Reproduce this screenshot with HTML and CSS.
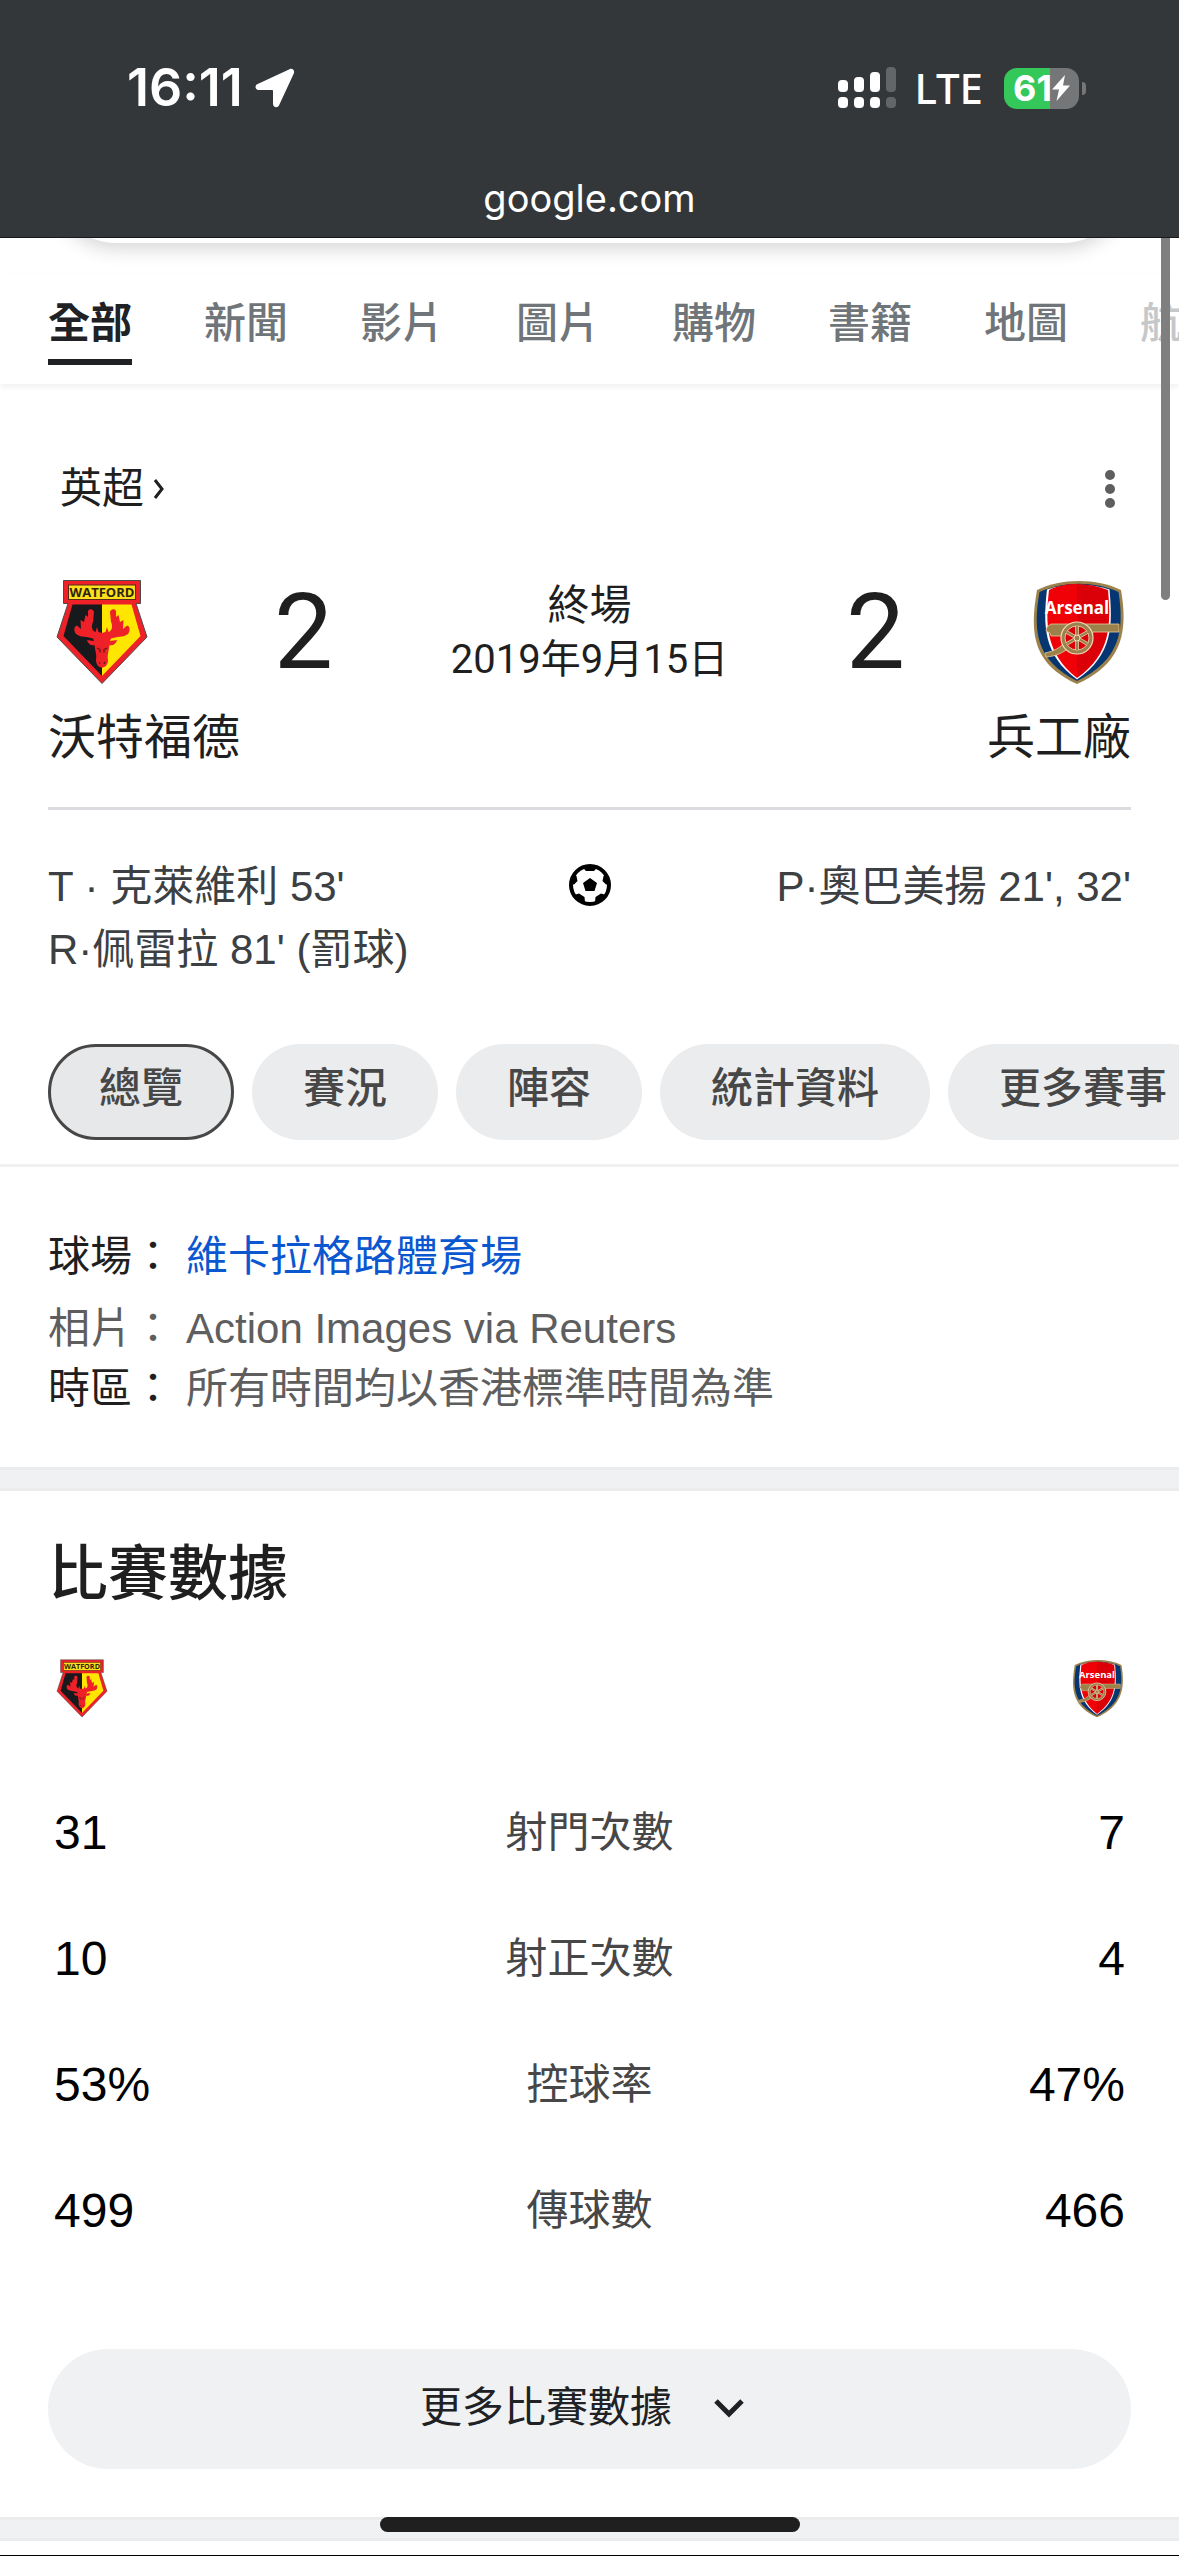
FILE: index.html
```html
<!DOCTYPE html>
<html lang="zh-Hant">
<head>
  <meta charset="UTF-8" />
  <meta name="viewport" content="width=device-width, initial-scale=1.0" />
  <title>沃特福德 2 - 2 兵工廠</title>
  <link rel="stylesheet" href="styles.css">
</head>
<body>

  <!-- shared club badges -->
  <svg class="sprite" aria-hidden="true">
    <symbol id="watford" viewBox="0 0 108 108">
      <path d="M15.500 1.500h77v23h-4.500L99 58 54 104.500 9 58l11-33.500h-4.500z" fill="#ed2127" stroke="#4b4b4b" stroke-width="1" />
      <path d="M24.500 25.500H54V97L15.500 57z" fill="#17191c" />
      <path d="M54 25.500h29.500L92.500 57 54 97z" fill="#ffe600" />
      <rect x="20.500" y="6" width="67" height="14.500" fill="#ffdf1a" stroke="#5a2a18" stroke-width="1" />
      <text x="54" y="18" text-anchor="middle" class="watford-text">WATFORD</text>
      <g fill="#ed2127">
        <path d="M54.200 54L50.500 53 49 48 47.500 53C44 52 43 47 45 43L46 33C45 29.500 41 29.500 40 32L40 38 37.500 36 36 43 32.500 41 33 50 29 46.500C26 47 25.500 52 28 55C32 58.500 40 57.500 45 59.500L46 62 39 61C40 65 43 67 46.500 66C47 72 49 75 48 81C48 86 51 88.500 54.200 88.500Z" />
        <path transform="translate(108) scale(-1 1)" d="M54.200 54L50.500 53 49 48 47.500 53C44 52 43 47 45 43L46 33C45 29.500 41 29.500 40 32L40 38 37.500 36 36 43 32.500 41 33 50 29 46.500C26 47 25.500 52 28 55C32 58.500 40 57.500 45 59.500L46 62 39 61C40 65 43 67 46.500 66C47 72 49 75 48 81C48 86 51 88.500 54.200 88.500Z" />
      </g>
      <path d="M49 69l3 1.500v3M59 69l-3 1.500v3M51 83l1 2M57 83l-1 2" fill="none" stroke="#5b1717" stroke-width="1.200" />
    </symbol>
    <symbol id="arsenal" viewBox="0 0 108 108">
      <path d="M14 11C38-1 74-1 98 11c7 41 2 73-44 94C8 84 7 52 14 11z" fill="#9c824a" />
      <path d="M16.500 13C40 2 72 2 95.500 13c6 38 2 68-41.500 89C12 81 10 51 16.500 13z" fill="#063672" />
      <path d="M24 10.500C42 4 68 4 86.500 10.500c3 35 4 65-32.500 90C20 76 20 46 24 10.500z" fill="#fff" />
      <path d="M26 11C36 6 46 5 54 5v94C23 75 22 46 26 11z" fill="#ef0107" />
      <path d="M54 5c10 0 21 2 31 6 3 35 3 64-31 88z" fill="#db0007" />
      <text x="54" y="35" text-anchor="middle" class="arsenal-text">Arsenal</text>
      <path d="M24 48l4-3h68v8H70l-1 4H28l-1-3-4-2zM22 74c9-2 15-5 20-11l4 6c-7 5-12 8-23 9z" fill="#9c824a" stroke="#e8c9a0" stroke-width=".8" />
      <circle cx="54" cy="59" r="16" fill="#9c824a" stroke="#f0dcc0" stroke-width="1.200" />
      <circle cx="54" cy="59" r="12" fill="#db0007" stroke="#f0dcc0" stroke-width=".8" />
      <path d="M54 47v24M43.500 53l21 12M64.500 53l-21 12" stroke="#f0dcc0" stroke-width="3.600" />
      <path d="M54 47v24M43.500 53l21 12M64.500 53l-21 12" stroke="#9c824a" stroke-width="2.200" />
      <circle cx="54" cy="59" r="3" fill="#9c824a" stroke="#f0dcc0" stroke-width="1" />
    </symbol>
  </svg>

  <header class="browser-bar">
    <div class="status">
      <div class="status-left">
        <span class="time">16:11</span>
        <svg class="location" viewBox="0 0 40 40"><path d="M34.500 1.200 2.700 16C-.8 17.600.2 22 3.600 22H17c.6 0 1 .4 1 1v12.800c0 4 4.800 4.600 6.200 1.200L38.800 5.400C40 2.400 37.500-.2 34.500 1.200z" fill="#fff" /></svg>
      </div>
      <div class="status-right">
        <svg class="signal" viewBox="0 0 58 42" fill="#fff">
          <rect x="0" y="13" width="10" height="12" rx="4" />
          <rect x="16" y="10" width="10" height="15" rx="4" />
          <rect x="32" y="5" width="10" height="20" rx="4" />
          <rect x="0" y="30" width="10" height="11" rx="4" />
          <rect x="16" y="30" width="10" height="11" rx="4" />
          <rect x="32" y="30" width="10" height="11" rx="4" />
          <g fill="#636567">
            <rect x="48" y="0" width="10" height="25" rx="4" />
            <rect x="48" y="30" width="10" height="11" rx="4" />
          </g>
        </svg>
        <span class="network">LTE</span>
        <div class="battery">
          <span class="level">61</span>
          <svg class="bolt" viewBox="0 0 18 26"><path d="M13 0 0 14.500h7L4.500 26 18 10.500h-7z" fill="#fff" /></svg>
        </div>
      </div>
    </div>
    <div class="address">google.com</div>
  </header>

  <div class="scrollbar"></div>

  <div class="search-edge"><div class="search-box"></div></div>

  <nav class="tabs">
    <a class="tab active" href="#">全部</a>
    <a class="tab" href="#">新聞</a>
    <a class="tab" href="#">影片</a>
    <a class="tab" href="#">圖片</a>
    <a class="tab" href="#">購物</a>
    <a class="tab" href="#">書籍</a>
    <a class="tab" href="#">地圖</a>
    <a class="tab" href="#">航班</a>
  </nav>

  <main>
    <section class="match">
      <div class="league">
        <a class="league-link" href="#">英超
          <svg class="league-arrow" viewBox="0 0 12 20"><path d="M2 1l7 9-7 9" fill="none" stroke="#1f1f1f" stroke-width="3" /></svg>
        </a>
        <button class="more-menu" aria-label="更多選項">
          <svg viewBox="0 0 12 38" fill="#5e5e5e"><circle cx="6" cy="5" r="5" /><circle cx="6" cy="19" r="5" /><circle cx="6" cy="33" r="5" /></svg>
        </button>
      </div>

      <div class="scoreboard">
        <svg class="badge"><use href="#watford" /></svg>
        <span class="score">2</span>
        <div class="match-state">
          <div>終場</div>
          <div class="date">2019年9月15日</div>
        </div>
        <span class="score">2</span>
        <svg class="badge"><use href="#arsenal" /></svg>
      </div>

      <div class="teams">
        <span>沃特福德</span>
        <span>兵工廠</span>
      </div>

      <div class="goals">
        <div class="scorers">
          <div>T · 克萊維利 53'</div>
          <div>R·佩雷拉 81' (罰球)</div>
        </div>
        <svg class="ball" viewBox="0 0 42 42">
          <circle cx="21" cy="21" r="19" fill="#fff" stroke="#000" stroke-width="4" />
          <path d="M21 14l7 5-2.500 8h-9L14 19zM15.500 2h11v3.500L25 7h-8l-1.500-1.500zM2 13l4-2.500L7.500 12 8.500 17 5 20.500H2zM40 13l-4-2.500-1.500 1.500-1 5 3.500 3.500h3zM5 31l5-1.500 5.500 3.500.5 5-1.500 2zM37 31l-5-1.500-5.500 3.500-.5 5 1.500 2z" />
        </svg>
        <div class="scorers right">
          <div>P·奧巴美揚 21', 32'</div>
        </div>
      </div>

      <div class="chips">
        <button class="chip selected">總覽</button>
        <button class="chip">賽況</button>
        <button class="chip">陣容</button>
        <button class="chip">統計資料</button>
        <button class="chip">更多賽事</button>
      </div>
    </section>

    <section class="info">
      <div class="info-row"><span class="label">球場：</span><a href="#">維卡拉格路體育場</a></div>
      <div class="info-row photo"><span>相片：</span><span>Action Images via Reuters</span></div>
      <div class="info-row"><span class="label">時區：</span><span>所有時間均以香港標準時間為準</span></div>
    </section>

    <div class="band"></div>

    <section class="stats">
      <h2>比賽數據</h2>
      <table>
        <thead>
          <tr>
            <th><svg class="badge-small"><use href="#watford" /></svg></th>
            <th></th>
            <th><svg class="badge-small"><use href="#arsenal" /></svg></th>
          </tr>
        </thead>
        <tbody>
          <tr><td>31</td><th>射門次數</th><td>7</td></tr>
          <tr><td>10</td><th>射正次數</th><td>4</td></tr>
          <tr><td>53%</td><th>控球率</th><td>47%</td></tr>
          <tr><td>499</td><th>傳球數</th><td>466</td></tr>
        </tbody>
      </table>
      <button class="more-stats">更多比賽數據
        <svg viewBox="0 0 30 20"><path d="M2 3l13 13L28 3" fill="none" stroke="#202124" stroke-width="5" /></svg>
      </button>
    </section>

    <div class="band"></div>
  </main>

  <div class="home-indicator"></div>
  <div class="bottom-line"></div>

</body>
</html>
```
FILE: styles.css
```css
* {
  box-sizing: border-box;
}

html {
  height: 100%;
}

body {
  margin: 0;
  height: 100%;
  overflow: hidden;
  position: relative;
  background: #fff;
  color: #1f1f1f;
  font-family: "Liberation Sans", "Noto Sans CJK TC", sans-serif;
  font-size: 42px;
  line-height: 60px;
}

a {
  text-decoration: none;
}

button {
  border: none;
  padding: 0;
  margin: 0;
  font: inherit;
  color: inherit;
}

svg {
  display: block;
  flex: none;
}

.sprite {
  display: none;
}

.watford-text {
  font: bold 13px "Open Sans", sans-serif;
  fill: #2b2410;
}

.arsenal-text {
  font: bold 17px "Open Sans", sans-serif;
  fill: #fff;
}

/* status bar + address */
.browser-bar {
  position: relative;
  z-index: 2;
  height: 238px;
  background: #34373a;
  border-bottom: 1px solid #17191b;
  color: #fff;
  font-family: Inter, sans-serif;
}

.status {
  display: flex;
  justify-content: space-between;
  padding: 58px 93px 0 127px;
}

.status-left,
.status-right {
  display: flex;
  align-items: center;
  height: 60px;
}

.status-left {
  gap: 12px;
}

.time {
  font-size: 52px;
  font-weight: 600;
}

.location {
  width: 40px;
  height: 40px;
}

.signal {
  width: 58px;
  height: 42px;
}

.network {
  margin: 0 21px 0 18px;
  font-family: "Noto Sans", sans-serif;
  font-size: 42px;
  font-weight: 500;
}

.battery {
  position: relative;
  display: flex;
  align-items: center;
  width: 75px;
  height: 41px;
  padding-left: 9px;
  margin-right: 7px;
  border-radius: 13px;
  background: linear-gradient(90deg, #34c759 46px, #747678 46px);
}

.battery::after {
  content: "";
  position: absolute;
  right: -7px;
  top: 14px;
  width: 4px;
  height: 13px;
  border-radius: 0 4px 4px 0;
  background: #747678;
}

.level {
  font-size: 36px;
  font-weight: 700;
}

.bolt {
  width: 18px;
  height: 26px;
}

.address {
  padding-top: 50px;
  text-align: center;
  font-size: 38px;
}

.scrollbar {
  position: absolute;
  z-index: 3;
  top: 238px;
  right: 9px;
  width: 9px;
  height: 362px;
  border-radius: 0 0 5px 5px;
  background: #7f7f7f;
}

/* lower edge of the search box */
.search-edge {
  position: relative;
  height: 36px;
}

.search-box {
  position: absolute;
  left: 48px;
  right: 48px;
  bottom: 31px;
  height: 138px;
  border-radius: 69px;
  background: #fff;
  box-shadow: 0 6px 18px rgba(32, 33, 36, 0.18);
}

.tabs {
  display: flex;
  gap: 72px;
  height: 110px;
  padding: 20px 48px 0;
  overflow: hidden;
  white-space: nowrap;
  box-shadow: 0 3px 6px rgba(0, 0, 0, 0.06);
  font-weight: 500;
}

.tab {
  flex: none;
  height: 71px;
  color: #70757a;
}

.tab.active {
  color: #202124;
  font-weight: 700;
  border-bottom: 6px solid #202124;
}

.tab:last-child {
  opacity: 0.4;
}

/* match card */
.match {
  padding-top: 75px;
  border-bottom: 3px solid #f0f1f2;
}

.league {
  display: flex;
  justify-content: space-between;
  align-items: center;
  padding: 0 60px;
}

.league-link {
  display: flex;
  align-items: center;
  gap: 9px;
  color: #1f1f1f;
}

.league-arrow {
  width: 12px;
  height: 20px;
}

.more-menu {
  width: 18px;
  background: none;
}

.more-menu svg {
  width: 12px;
  height: 38px;
  margin: 0 auto;
}

.scoreboard {
  display: flex;
  justify-content: space-between;
  align-items: center;
  height: 108px;
  margin-top: 60px;
  padding: 0 48px;
}

.badge {
  width: 108px;
  height: 108px;
}

.score {
  font-family: Roboto, sans-serif;
  font-size: 105px;
  line-height: 108px;
}

.match-state {
  font-family: Roboto, "Noto Sans CJK TC", sans-serif;
  line-height: 54px;
  text-align: center;
}

.date {
  font-size: 40px;
}

.teams {
  display: flex;
  justify-content: space-between;
  margin: 18px 48px 0;
  padding-bottom: 36px;
  border-bottom: 3px solid #dadce0;
  font-size: 48px;
  line-height: 66px;
}

.goals {
  display: flex;
  justify-content: space-between;
  padding: 45px 48px 0;
  color: #3c4043;
  line-height: 63px;
}

.scorers {
  flex: 1;
}

.scorers.right {
  text-align: right;
}

.ball {
  width: 42px;
  height: 42px;
  margin-top: 9px;
}

.chips {
  display: flex;
  gap: 18px;
  padding: 63px 0 24px 48px;
  overflow: hidden;
}

.chip {
  flex: none;
  height: 96px;
  padding: 0 51px 6px;
  border-radius: 48px;
  background: #ebecee;
  color: #474747;
  font-weight: 500;
}

.chip.selected {
  padding: 0 48px 6px;
  border: 3px solid #474747;
  background: #e6e8e9;
}

.info {
  padding: 60px 48px 48px;
  color: #5e5e5e;
}

.info-row {
  display: flex;
  gap: 12px;
}

.info-row.photo {
  padding-top: 12px;
}

.info-row .label {
  color: #1f1f1f;
}

.info-row a {
  color: #0b57d0;
}

.band {
  height: 24px;
  background: #eff1f3;
  border-top: 3px solid #ebecee;
  border-bottom: 3px solid #ebecee;
}

/* stats */
.stats {
  padding: 39px 48px 48px;
}

.stats h2 {
  margin: 0;
  font-size: 60px;
  font-weight: 500;
  line-height: 90px;
}

.stats table {
  width: 100%;
  table-layout: fixed;
  border-collapse: collapse;
}

.stats td,
.stats th {
  height: 126px;
  padding: 0 6px;
  font-weight: 400;
  text-align: center;
}

.stats td {
  color: #000;
  font-size: 48px;
}

.stats tbody th {
  color: #474747;
}

.stats thead th {
  height: 150px;
  padding: 0 4px 15px;
}

.stats tr > :first-child {
  text-align: left;
}

.stats tr > :last-child {
  text-align: right;
}

.badge-small {
  display: inline-block;
  vertical-align: middle;
  width: 60px;
  height: 60px;
}

.more-stats {
  display: flex;
  align-items: center;
  justify-content: center;
  gap: 42px;
  width: 100%;
  height: 120px;
  margin-top: 75px;
  padding: 0 15px 3px 0;
  border-radius: 60px;
  background: #eff1f3;
  color: #202124;
}

.more-stats svg {
  width: 30px;
  height: 20px;
}

.home-indicator {
  position: absolute;
  left: 50%;
  bottom: 24px;
  width: 420px;
  height: 15px;
  margin-left: -210px;
  border-radius: 8px;
  background: #1f1f1f;
}

.bottom-line {
  position: absolute;
  left: 0;
  right: 0;
  bottom: 0;
  height: 1px;
  background: #000;
}
```
